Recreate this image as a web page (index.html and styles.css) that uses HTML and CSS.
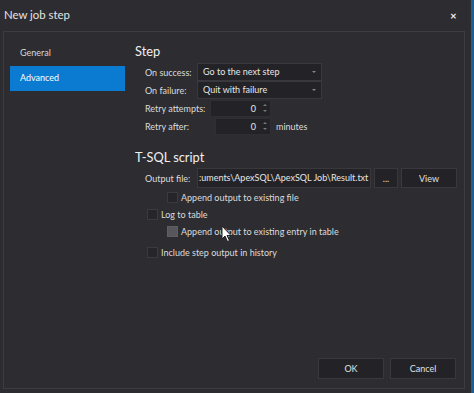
FILE: index.html
```html
<!DOCTYPE html>
<html lang="en">
<head>
    <meta charset="UTF-8">
    <title>New job step</title>
    <link rel="stylesheet" href="styles.css">
</head>
<body>
    <div class="dialog">
        <div class="titlebar">
            <span class="title">New job step</span>
            <span class="close">&#x2715;</span>
        </div>
        <div class="frame">
            <div class="main">
                <div class="nav">
                    <div class="nav-item">General</div>
                    <div class="nav-item active">Advanced</div>
                </div>
                <div class="content">
                    <div class="heading">Step</div>
                    <div class="row">
                        <span class="label">On success:</span>
                        <div class="select">Go to the next step<span class="caret"></span></div>
                    </div>
                    <div class="row">
                        <span class="label">On failure:</span>
                        <div class="select">Quit with failure<span class="caret"></span></div>
                    </div>
                    <div class="row">
                        <span class="label">Retry attempts:</span>
                        <div class="spin">0<span class="arrows"><i class="up"></i><i class="down"></i></span></div>
                    </div>
                    <div class="row">
                        <span class="label">Retry after:</span>
                        <div class="spin short">0<span class="arrows"><i class="up"></i><i class="down"></i></span></div>
                        <span class="unit">minutes</span>
                    </div>

                    <div class="heading second">T-SQL script</div>
                    <div class="row file-row">
                        <span class="label">Output file:</span>
                        <div class="input">:uments\ApexSQL\ApexSQL Job\Result.txt</div>
                        <button class="btn small">...</button>
                        <button class="btn view">View</button>
                    </div>
                    <label class="check indent"><span class="box"></span>Append output to existing file</label>
                    <label class="check"><span class="box"></span>Log to table</label>
                    <label class="check indent"><span class="box hover"></span>Append output to existing entry in table</label>
                    <label class="check gap"><span class="box"></span>Include step output in history</label>
                </div>
            </div>
            <div class="footer">
                <button class="btn action">OK</button>
                <button class="btn action">Cancel</button>
            </div>
        </div>
        <div class="edge"></div>
    </div>
    <svg class="cursor" width="12" height="18" viewBox="0 0 12 18">
        <path d="M1 1 L1 14 L4 11 L6.5 16.5 L8.5 15.5 L6 10.5 L10 10.5 Z" fill="#fff" stroke="#222" stroke-width="1"/>
    </svg>
</body>
</html>
```

FILE: styles.css
```css
body {
    margin: 0;
    background-color: #2c2c31;
    font-family: Lato, "Noto Sans", sans-serif;
    font-size: 9px;
    color: #dcdcdc;
    width: 474px;
    height: 393px;
    overflow: hidden;
    position: relative;
}
.dialog {
    position: relative;
    width: 474px;
    height: 393px;
}
.titlebar {
    height: 31px;
    display: flex;
    align-items: center;
    justify-content: space-between;
    padding: 0 17px 0 4px;
}
.title {
    font-size: 11.4px;
    color: #e4e4e4;
    margin-top: -2px;
}
.close {
    font-size: 8px;
    color: #e8e8e8;
    font-weight: bold;
}
.frame {
    margin-left: 3px;
    width: 460px;
    height: 356px;
    border: 1px solid #3c3c42;
    display: flex;
    flex-direction: column;
}
.main {
    flex: 1;
    display: flex;
}
.nav {
    width: 115px;
    padding: 9px 0 0 6px;
}
.nav-item {
    height: 25px;
    line-height: 24px;
    padding-left: 10px;
    color: #d8d8d8;
}
.nav-item.active {
    background-color: #0a7bd0;
    color: #fff;
}
.content {
    flex: 1;
    padding: 10px 0 0 10px;
    display: flex;
    flex-direction: column;
}
.heading {
    font-size: 12.8px;
    color: #f0f0f0;
    height: 20px;
    line-height: 18px;
    margin-bottom: 1px;
}
.heading.second {
    margin-top: 13px;
    margin-bottom: 0;
}
.row {
    display: flex;
    align-items: center;
    height: 18px;
    padding-left: 10px;
}
.label {
    width: 52px;
    white-space: nowrap;
}
.select {
    position: relative;
    width: 118px;
    height: 16px;
    line-height: 15px;
    padding-left: 5px;
    background-color: #232327;
    border: 1px solid #38383d;
    color: #e6e6e6;
}
.caret {
    position: absolute;
    right: 5px;
    top: 7px;
    border-left: 2px solid transparent;
    border-right: 2px solid transparent;
    border-top: 2px solid #888;
}
.spin {
    margin-left: 13px;
    width: 59px;
    height: 15px;
    line-height: 15px;
    background-color: #232327;
    border: 1px solid #2e2e33;
    display: flex;
    justify-content: flex-end;
    color: #e6e6e6;
}
.spin.short {
    margin-left: 18px;
    width: 54px;
}
.arrows {
    width: 10px;
    display: flex;
    flex-direction: column;
    align-items: center;
    justify-content: center;
    gap: 4px;
    margin-left: 4px;
}
.arrows i {
    border-left: 2px solid transparent;
    border-right: 2px solid transparent;
}
.arrows .up {
    border-bottom: 2px solid #777;
}
.arrows .down {
    border-top: 2px solid #777;
}
.unit {
    margin-left: 5px;
}
.file-row {
    height: 20px;
    margin-bottom: 1px;
}
.input {
    width: 171px;
    height: 18px;
    line-height: 17px;
    padding-left: 1px;
    background-color: #232327;
    border: 1px solid #38383d;
    color: #e6e6e6;
    white-space: nowrap;
    overflow: hidden;
}
.btn {
    font-family: inherit;
    font-size: 9px;
    color: #e0e0e0;
    background-color: #232327;
    border: 1px solid #38383d;
    padding: 0;
    height: 20px;
}
.btn.small {
    width: 24px;
    margin-left: 3px;
}
.btn.view {
    width: 56px;
    margin-left: 3px;
}
.check {
    display: flex;
    align-items: center;
    height: 17px;
    padding-left: 12px;
}
.check.indent {
    padding-left: 32px;
}
.check.gap {
    margin-top: 4px;
}
.box {
    width: 9px;
    height: 9px;
    background-color: #26262a;
    border: 1px solid #3a3a3f;
    margin-right: 3px;
}
.box.hover {
    background-color: #56565b;
    border-color: #5e5e63;
}
.footer {
    display: flex;
    justify-content: flex-end;
    gap: 6px;
    padding: 0 8px 9px 0;
}
.btn.action {
    width: 66px;
    height: 21px;
}
.edge {
    position: absolute;
    top: 0;
    right: 0;
    width: 3px;
    height: 393px;
    background-color: #1d5f93;
}
.cursor {
    position: absolute;
    left: 221px;
    top: 225px;
}
```
